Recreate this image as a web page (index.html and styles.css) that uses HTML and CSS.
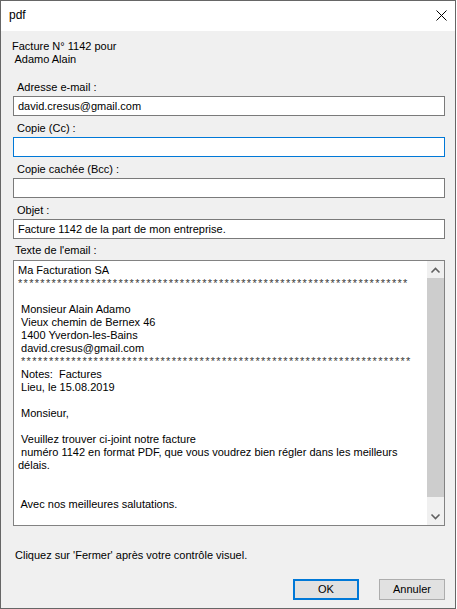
FILE: index.html
```html
<!DOCTYPE html>
<html lang="fr">
<head>
<meta charset="utf-8">
<title>pdf</title>
<link rel="stylesheet" href="styles.css">
</head>
<body>
<div class="window">
  <div class="titlebar">
    <span class="title">pdf</span>
    <svg class="close" width="11" height="11" viewBox="0 0 11 11" aria-label="Fermer">
      <path d="M0.5 0.5 L10.5 10.5 M10.5 0.5 L0.5 10.5" stroke="#000" stroke-width="1" fill="none"/>
    </svg>
  </div>
  <div class="body">
    <div class="intro">
      <div class="line">Facture N° 1142 pour</div>
      <div class="line"> Adamo Alain</div>
    </div>

    <div class="label first">Adresse e-mail :</div>
    <div class="input">david.cresus@gmail.com</div>

    <div class="label">Copie (Cc) :</div>
    <div class="input focused"></div>

    <div class="label">Copie cachée (Bcc) :</div>
    <div class="input"></div>

    <div class="label">Objet :</div>
    <div class="input">Facture 1142 de la part de mon entreprise.</div>

    <div class="label label-text">Texte de l'email :</div>
    <div class="textarea">
      <div class="content">
        <div class="line">Ma Facturation SA</div>
        <div class="line stars">**********************************************************************</div>
        <div class="line"></div>
        <div class="line"> Monsieur Alain Adamo</div>
        <div class="line"> Vieux chemin de Bernex 46</div>
        <div class="line"> 1400 Yverdon-les-Bains</div>
        <div class="line"> david.cresus@gmail.com</div>
        <div class="line stars indent">**********************************************************************</div>
        <div class="line"> Notes:  Factures</div>
        <div class="line"> Lieu, le 15.08.2019</div>
        <div class="line"></div>
        <div class="line"> Monsieur,</div>
        <div class="line"></div>
        <div class="line"> Veuillez trouver ci-joint notre facture</div>
        <div class="line"> numéro 1142 en format PDF, que vous voudrez bien régler dans les meilleurs</div>
        <div class="line">délais.</div>
        <div class="line"></div>
        <div class="line"></div>
        <div class="line"> Avec nos meilleures salutations.</div>
      </div>
      <div class="scrollbar">
        <div class="sb-btn">
          <svg width="17" height="17" viewBox="0 0 17 17"><polyline points="4.5,11.5 8.5,7.5 12.5,11.5" fill="none" stroke="#606060" stroke-width="1.6"/></svg>
        </div>
        <div class="sb-thumb"></div>
        <div class="sb-track"></div>
        <div class="sb-btn">
          <svg width="17" height="17" viewBox="0 0 17 17"><polyline points="4.5,6.5 8.5,10.5 12.5,6.5" fill="none" stroke="#606060" stroke-width="1.6"/></svg>
        </div>
      </div>
    </div>

    <div class="hint">Cliquez sur 'Fermer' après votre contrôle visuel.</div>

    <div class="buttons">
      <button class="btn btn-default">OK</button>
      <button class="btn">Annuler</button>
    </div>
  </div>
</div>
</body>
</html>
```

FILE: styles.css
```css
* {
  box-sizing: border-box;
}

html,
body {
  margin: 0;
  padding: 0;
  background: #ffffff;
}

body {
  font-family: "Liberation Sans", Arial, sans-serif;
  font-size: 11px;
  line-height: 13px;
  color: #000;
}

.window {
  width: 456px;
  height: 609px;
  border: 1px solid #666666;
  background: #f0f0f0;
  display: flex;
  flex-direction: column;
}

.titlebar {
  flex: none;
  height: 30px;
  background: #ffffff;
  display: flex;
  align-items: center;
  justify-content: space-between;
  padding: 0 8px 2px 8px;
}

.title {
  font-size: 12px;
  line-height: 16px;
}

.close {
  display: block;
}

.body {
  flex: 1;
  display: flex;
  flex-direction: column;
  padding: 9px 10px 0 12px;
}

.line {
  height: 13px;
  white-space: pre;
}

.intro {
  margin-left: -1px;
}

.label {
  margin: 6px 0 2px 4px;
}

.label.first {
  margin-top: 15px;
}

.label.label-text {
  margin: 5px 0 3px 2px;
}

.input {
  height: 20px;
  border: 1px solid #7a7a7a;
  background: #ffffff;
  padding: 0 4px;
  line-height: 18px;
  white-space: pre;
}

.input.focused {
  border-color: #0078d7;
}

.textarea {
  height: 266px;
  border: 1px solid #828282;
  background: #ffffff;
  display: flex;
}

.content {
  flex: 1;
  padding: 3px 0 0 4px;
  overflow: hidden;
}

.stars {
  letter-spacing: 1.3px;
  color: #3a3a3a;
  overflow: hidden;
}

.stars.indent {
  padding-left: 3px;
}

.scrollbar {
  flex: none;
  width: 17px;
  background: #f0f0f0;
  display: flex;
  flex-direction: column;
}

.sb-btn {
  height: 17px;
  flex: none;
}

.sb-btn svg {
  display: block;
}

.sb-thumb {
  height: 219px;
  background: #cdcdcd;
  flex: none;
}

.sb-track {
  flex: 1;
}

.hint {
  margin: 23px 0 0 2px;
}

.buttons {
  margin-top: 17px;
  display: flex;
  justify-content: flex-end;
  gap: 20px;
}

.btn {
  width: 66px;
  height: 21px;
  padding: 0;
  margin: 0;
  font: inherit;
  color: #000;
  background: #e1e1e1;
  border: 1px solid #adadad;
  border-radius: 0;
}

.btn-default {
  border: 2px solid #0078d7;
}
```
